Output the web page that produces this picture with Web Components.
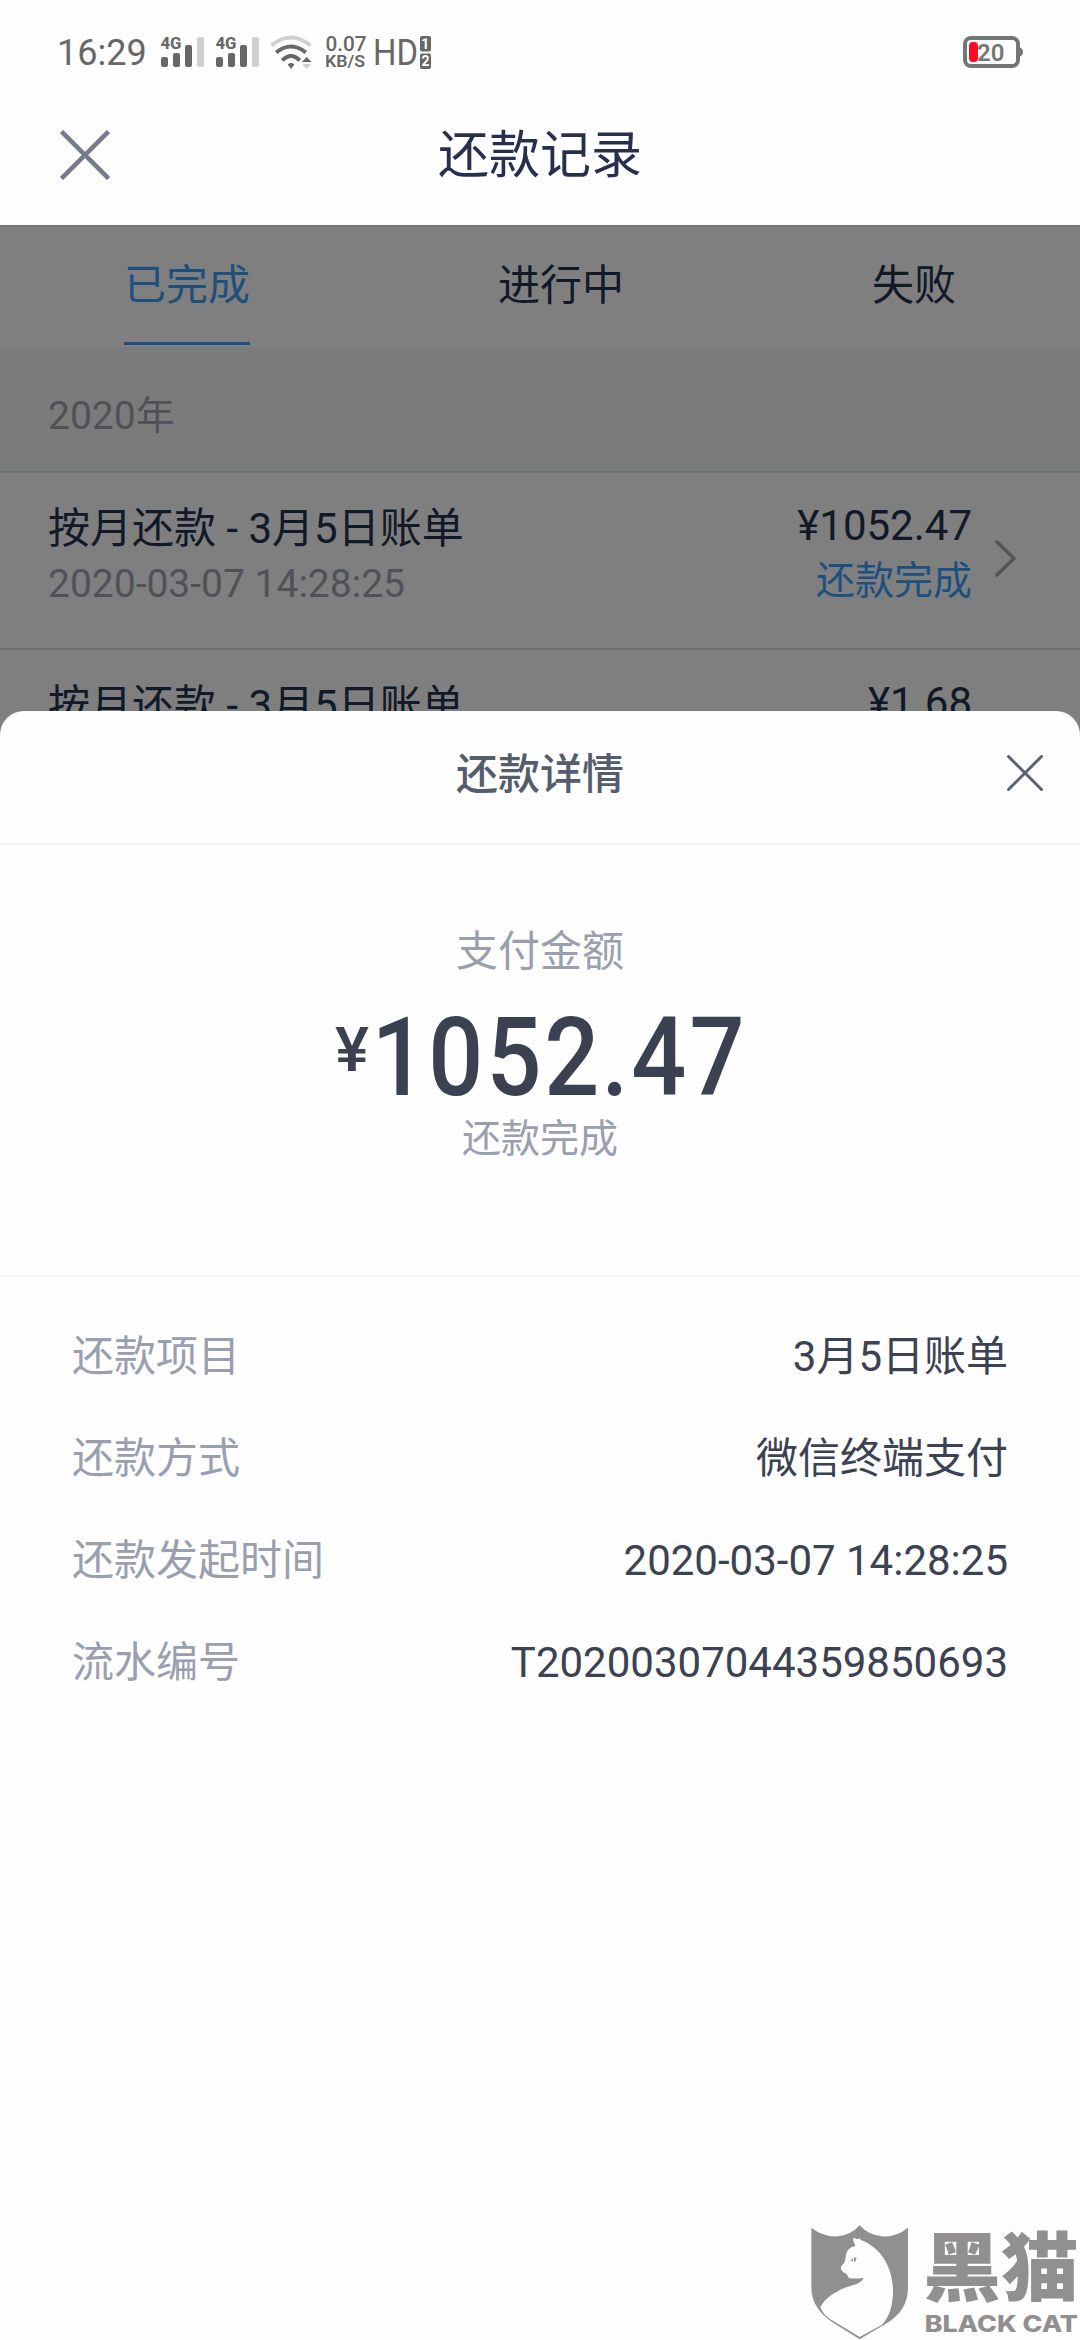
<!DOCTYPE html>
<html lang="zh-CN">
<head>
<meta charset="utf-8">
<meta name="viewport" content="width=device-width, initial-scale=1">
<title>还款记录</title>
<style>
  body {
    margin: 0;
    width: 1080px;
    height: 2340px;
    overflow: hidden;
    background: #fefefe;
    font-family: Roboto, "Noto Sans CJK SC", sans-serif;
    --ink: #25334f;
    --muted: #999fae;
    --blue: #3a9fff;
  }
</style>
</head>
<body>
  <app-screen>
    <status-bar slot="top" time="16:29"></status-bar>
    <nav-bar slot="top">还款记录</nav-bar>

    <tab-bar>
      <tab-item active>已完成</tab-item>
      <tab-item>进行中</tab-item>
      <tab-item>失败</tab-item>
    </tab-bar>
    <year-header>2020年</year-header>
    <record-row date="2020-03-07 14:28:25" amount="¥1052.47" status="还款完成">按月还款 - 3月5日账单</record-row>
    <record-row amount="¥1.68">按月还款 - 3月5日账单</record-row>

    <detail-sheet slot="sheet" heading="还款详情">
      <pay-summary label="支付金额" amount="1052.47" status="还款完成"></pay-summary>
      <detail-row label="还款项目">3月5日账单</detail-row>
      <detail-row label="还款方式">微信终端支付</detail-row>
      <detail-row label="还款发起时间">2020-03-07 14:28:25</detail-row>
      <detail-row label="流水编号">T20200307044359850693</detail-row>
    </detail-sheet>
    <brand-mark slot="mark"></brand-mark>
  </app-screen>

<script>
class AppScreen extends HTMLElement {
  constructor() {
    super();

    this.attachShadow({mode: 'open'}).innerHTML = `
      <style>
        :host {
          display: flex;
          flex-direction: column;
          position: relative;
          height: 2340px;
          overflow: hidden;
        }

        main {
          flex: 1;
          position: relative;
          overflow: hidden;
          background: #fff;
        }

        .scrim {
          position: absolute;
          inset: 0;
          box-sizing: border-box;
          border-top: 2px solid rgba(0, 0, 0, 0.08);
          background: rgba(0, 0, 0, 0.5);
        }

        .sheet {
          position: absolute;
          inset: 486px 0 0;
        }

        .mark {
          position: absolute;
          right: 0;
          bottom: 0;
        }
      </style>

      <slot name="top"></slot>
      <main>
        <slot></slot>
        <div class="scrim"></div>
        <div class="sheet"><slot name="sheet"></slot></div>
      </main>
      <div class="mark"><slot name="mark"></slot></div>
    `;
  }
}

class SignalBars extends HTMLElement {
  constructor() {
    super();

    this.attachShadow({mode: 'open'}).innerHTML = `
      <style>
        :host { display: block; width: 44px; height: 84px; }
        svg { display: block; }
      </style>
      <svg width="44" height="84" fill="#676767">
        <text x="0.5" y="49" font-size="17" font-weight="800" textLength="21" lengthAdjust="spacingAndGlyphs">4G</text>
        <rect x="1" y="57" width="7" height="10" rx="2"/>
        <rect x="13" y="53" width="7" height="14" rx="2"/>
        <rect x="25" y="45" width="7" height="22" rx="2"/>
        <rect x="37" y="37" width="7" height="30" rx="2" fill="#d0d0d0"/>
      </svg>
    `;
  }
}

class WifiIcon extends HTMLElement {
  constructor() {
    super();

    this.attachShadow({mode: 'open'}).innerHTML = `
      <style>
        :host { display: block; width: 42px; height: 84px; }
        svg { display: block; }
      </style>
      <svg width="42" height="84" fill="none" stroke="#676767" stroke-width="4">
        <g transform="translate(0 35)">
          <path d="M1.5 10.5Q21 -5.5 40.5 10.5" stroke="#d0d0d0"/>
          <path d="M6.2 17.5Q21 5.5 35.8 17.5"/>
          <path d="M12.3 25.3Q21 16.5 29.7 25.3"/>
          <path d="M17.7 29.4Q21 26.6 24.5 29.4L21.1 34Z" fill="#676767" stroke="none"/>
          <path d="M32 27L36.7 22L41.5 27Z" fill="#676767" stroke="none"/>
          <path d="M32 29L36.7 34L41.5 29Z" fill="#d0d0d0" stroke="none"/>
        </g>
      </svg>
    `;
  }
}

class NetworkInfo extends HTMLElement {
  constructor() {
    super();

    this.attachShadow({mode: 'open'}).innerHTML = `
      <style>
        :host { display: block; width: 108px; height: 84px; }
        svg { display: block; }
      </style>
      <svg width="108" height="84" fill="#676767">
        <text x="-0.5" y="51.3" font-size="20.5" font-weight="500" textLength="41" lengthAdjust="spacingAndGlyphs">0.07</text>
        <text x="-1" y="67" font-size="16.5" font-weight="600" textLength="40" lengthAdjust="spacingAndGlyphs">KB/S</text>
        <text x="47" y="65" font-size="36" textLength="45" lengthAdjust="spacingAndGlyphs">HD</text>
        <rect x="94" y="36" width="11" height="15.5" rx="2"/>
        <rect x="94" y="53.5" width="11" height="15.5" rx="2"/>
        <g fill="#fff" font-size="14" font-weight="700" text-anchor="middle">
          <text x="99.3" y="49">1</text>
          <text x="99.5" y="66.3">2</text>
        </g>
      </svg>
    `;
  }
}

class BatteryLevel extends HTMLElement {
  constructor() {
    super();

    this.attachShadow({mode: 'open'}).innerHTML = `
      <style>
        :host { display: block; width: 60px; height: 84px; }
        svg { display: block; }
      </style>
      <svg width="60" height="84">
        <rect x="2" y="38" width="53" height="28" rx="6" fill="none" stroke="#757575" stroke-width="4"/>
        <path d="M57 47.5Q60 49 60 52T57 56.5Z" fill="#757575"/>
        <rect x="6" y="42" width="9" height="20" rx="4" fill="#ff0a22"/>
        <text x="14" y="61" font-size="24" font-weight="600" fill="#757575">20</text>
      </svg>
    `;
  }
}

class StatusBar extends HTMLElement {
  constructor() {
    super();

    this.attachShadow({mode: 'open'}).innerHTML = `
      <style>
        :host {
          display: flex;
          height: 84px;
          padding: 0 57px;
          color: #676767;
        }

        .time {
          width: 103px;
          padding-top: 23px;
          font-size: 36px;
          line-height: 60px;
        }

        signal-bars { margin-right: 11px; }
        wifi-icon { margin-right: 14px; }
        battery-level { margin-left: auto; }
      </style>

      <span class="time">${this.getAttribute('time')}</span>
      <signal-bars></signal-bars>
      <signal-bars></signal-bars>
      <wifi-icon></wifi-icon>
      <network-info></network-info>
      <battery-level></battery-level>
    `;
  }
}

class NavBar extends HTMLElement {
  constructor() {
    super();

    this.attachShadow({mode: 'open'}).innerHTML = `
      <style>
        :host {
          display: grid;
          grid-template-columns: 110px 1fr 110px;
          align-items: center;
          height: 141px;
          color: #26304d;
          font-size: 51px;
          text-align: center;
        }

        svg { display: block; justify-self: end; }
        span { padding-top: 3px; line-height: 70px; }
      </style>

      <svg width="50" height="50" stroke="#757b8e" stroke-width="4.5"><path d="M1.5 1.5L48.5 48.5M48.5 1.5L1.5 48.5"/></svg>
      <span><slot></slot></span>
    `;
  }
}

class TabBar extends HTMLElement {
  constructor() {
    super();

    this.attachShadow({mode: 'open'}).innerHTML = `
      <style>
        :host {
          display: flex;
          justify-content: space-around;
          height: 123px;
          background: #fff;
        }
      </style>
      <slot></slot>
    `;
  }
}

class TabItem extends HTMLElement {
  constructor() {
    super();

    this.attachShadow({mode: 'open'}).innerHTML = `
      <style>
        :host {
          display: block;
          box-sizing: border-box;
          height: 120px;
          padding-top: 31px;
          color: var(--ink);
          font-size: 42px;
          line-height: 60px;
        }

        :host([active]) {
          color: var(--blue);
          border-bottom: 3px solid;
        }
      </style>
      <slot></slot>
    `;
  }
}

class YearHeader extends HTMLElement {
  constructor() {
    super();

    this.attachShadow({mode: 'open'}).innerHTML = `
      <style>
        :host {
          display: block;
          box-sizing: border-box;
          height: 125px;
          padding: 38px 48px 0;
          border-bottom: 2px solid #dfe0e8;
          background: #f4f8f6;
          color: #a0a3b1;
          font-size: 39px;
          line-height: 60px;
        }
      </style>
      <slot></slot>
    `;
  }
}

class RecordRow extends HTMLElement {
  constructor() {
    super();

    this.attachShadow({mode: 'open'}).innerHTML = `
      <style>
        :host {
          display: flex;
          box-sizing: border-box;
          height: 177px;
          padding: 0 62px 0 48px;
          border-bottom: 2px solid #dfe0e8;
          background: #fff;
          color: var(--ink);
          font-size: 42px;
          line-height: 56px;
        }

        .main { flex: 1; padding-top: 28px; }
        .side { padding-top: 25px; text-align: right; }
        .date, .status { font-size: 39px; line-height: 54px; }
        .date { color: #a0a3b1; }
        .status { color: var(--blue); }
        svg { margin: 67px 0 0 22px; }
      </style>

      <div class="main">
        <div><slot></slot></div>
        <div class="date">${this.getAttribute('date') || ''}</div>
      </div>
      <div class="side">
        <div>${this.getAttribute('amount')}</div>
        <div class="status">${this.getAttribute('status') || ''}</div>
      </div>
      <svg width="24" height="38" fill="none" stroke="#a8a8b2" stroke-width="3.4" stroke-linecap="round"><path d="M3 2L20 18.5L3 35"/></svg>
    `;
  }
}

class DetailSheet extends HTMLElement {
  constructor() {
    super();

    this.attachShadow({mode: 'open'}).innerHTML = `
      <style>
        :host {
          display: block;
          height: 100%;
          border-radius: 24px 24px 0 0;
          background: #fefefe;
        }

        header {
          display: grid;
          grid-template-columns: 80px 1fr 80px;
          box-sizing: border-box;
          height: 134px;
          padding-top: 34px;
          border-bottom: 2px solid #f4f5f6;
          color: #545d6d;
          font-size: 42px;
          font-weight: 500;
          line-height: 60px;
          text-align: center;
        }

        header span { grid-column: 2; }
        svg { margin: 8px 0 0 5px; }
      </style>

      <header>
        <span>${this.getAttribute('heading')}</span>
        <svg width="40" height="40" stroke="#596172" stroke-width="3" stroke-linecap="round"><path d="M3.5 3.5L36.5 36.5M36.5 3.5L3.5 36.5"/></svg>
      </header>
      <slot></slot>
    `;
  }
}

class PaySummary extends HTMLElement {
  constructor() {
    super();

    // digits are centred one by one, the point takes half a column
    this.attachShadow({mode: 'open'}).innerHTML = `
      <style>
        :host {
          display: block;
          box-sizing: border-box;
          height: 432px;
          margin-bottom: 29px;
          padding-top: 77px;
          border-bottom: 2px solid #f5f6f6;
          color: var(--muted);
          text-align: center;
        }

        .label { font-size: 42px; line-height: 60px; }
        .status { font-size: 39px; line-height: 58px; }
        svg { display: block; margin: 0 auto; overflow: visible; }
      </style>

      <div class="label">${this.getAttribute('label')}</div>
      <svg width="420" height="128" fill="#3b4151" font-weight="500">
        <text x="5" y="89" font-size="62" textLength="34" lengthAdjust="spacingAndGlyphs">¥</text>
        <text transform="translate(0 113) scale(0.88 1)" x="78.4 142.8 209 274.7 323.9 373.5 439.8" font-size="110" text-anchor="middle">${this.getAttribute('amount')}</text>
      </svg>
      <div class="status">${this.getAttribute('status')}</div>
    `;
  }
}

class DetailRow extends HTMLElement {
  constructor() {
    super();

    this.attachShadow({mode: 'open'}).innerHTML = `
      <style>
        :host {
          display: flex;
          justify-content: space-between;
          padding: 0 72px;
          color: #3b4252;
          font-size: 42px;
          line-height: 102px;
        }

        .label { color: var(--muted); }
      </style>

      <span class="label">${this.getAttribute('label')}</span>
      <span><slot></slot></span>
    `;
  }
}

class BrandMark extends HTMLElement {
  constructor() {
    super();

    this.attachShadow({mode: 'open'}).innerHTML = `
      <style>
        :host { display: block; }
        svg { display: block; }
      </style>

      <svg width="290" height="140" viewBox="0 0 870 420" fill="#918f90">
        <path d="M64 83Q100 111 143 109Q184 105 209 76Q235 105 277 109Q320 111 354 83V262C354 310 332 345 290 370L209 418L126 366C86 338 64 306 64 262Z"/>
        <path fill="#fefefe" d="M190 113L203 118L208 115L214 121C270 141 308 200 309 270C309 315 300 350 275 375L209 411L120 357Q98 342 91 322C103 293 150 265 188 256Q215 249 221 234Q190 237 177 234C171 228 174 223 165 220Q148 208 154 199Q168 187 167 167C171 147 182 141 196 138Q188 123 190 113Z"/>
        <path d="M181 182L189 174L188 184ZM193 171L200 175L196 184L191 187Z"/>
        <text x="400" y="286" font-size="226" font-weight="900" font-family="Noto Sans CJK SC, sans-serif" textLength="466" lengthAdjust="spacingAndGlyphs">黑猫</text>
        <text x="404" y="397" font-size="67" font-weight="800" font-family="Inter, sans-serif" textLength="460" lengthAdjust="spacingAndGlyphs">BLACK CAT</text>
      </svg>
    `;
  }
}

customElements.define('signal-bars', SignalBars);
customElements.define('wifi-icon', WifiIcon);
customElements.define('network-info', NetworkInfo);
customElements.define('battery-level', BatteryLevel);
customElements.define('status-bar', StatusBar);
customElements.define('nav-bar', NavBar);
customElements.define('tab-item', TabItem);
customElements.define('tab-bar', TabBar);
customElements.define('year-header', YearHeader);
customElements.define('record-row', RecordRow);
customElements.define('pay-summary', PaySummary);
customElements.define('detail-row', DetailRow);
customElements.define('detail-sheet', DetailSheet);
customElements.define('brand-mark', BrandMark);
customElements.define('app-screen', AppScreen);
</script>
</body>
</html>
